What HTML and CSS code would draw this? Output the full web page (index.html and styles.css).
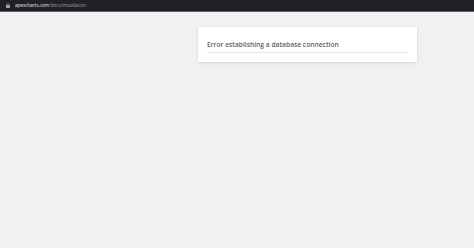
FILE: index.html
```html
<!DOCTYPE html>
<html lang="en">
<head>
    <meta charset="UTF-8">
    <title>Database Error</title>
    <link rel="stylesheet" href="styles.css">
</head>
<body>
    <div class="topbar">
        <svg class="lock" width="4" height="5" viewBox="0 0 4 5">
            <rect x="0" y="2" width="4" height="3" fill="#9aa0a6"/>
            <path d="M1 2V1.2a1 1 0 0 1 2 0V2" fill="none" stroke="#9aa0a6" stroke-width="0.6"/>
        </svg>
        <span class="host">apexcharts.com</span><span class="path">/docs/installation</span>
    </div>
    <div class="page">
        <div class="card">
            <h1>Error establishing a database connection</h1>
        </div>
    </div>
</body>
</html>
```

FILE: styles.css
```css
* {
    margin: 0;
    padding: 0;
    box-sizing: border-box;
}

body {
    font-family: 'Open Sans', sans-serif;
    background-color: #f1f1f1;
    height: 100vh;
    display: flex;
    flex-direction: column;
}

.topbar {
    height: 12px;
    background-color: #202124;
    border-bottom: 1px solid #5f6368;
    display: flex;
    align-items: center;
    padding-left: 6px;
    font-size: 4.6px;
    line-height: 1;
}

.topbar .lock {
    margin-right: 5px;
}

.topbar .host {
    color: #e8eaed;
}

.topbar .path {
    color: #9aa0a6;
}

.page {
    flex: 1;
    padding-top: 15px;
    padding-left: 198px;
}

.card {
    width: 219px;
    height: 35px;
    background-color: #fff;
    box-shadow: 0 1px 3px rgba(0, 0, 0, 0.13);
    padding: 13px 9px 0 9px;
}

.card h1 {
    font-size: 6.7px;
    font-weight: 600;
    color: #5f5f5f;
    padding-bottom: 2px;
    border-bottom: 1px solid #eaeaea;
    line-height: 10px;
}
```
